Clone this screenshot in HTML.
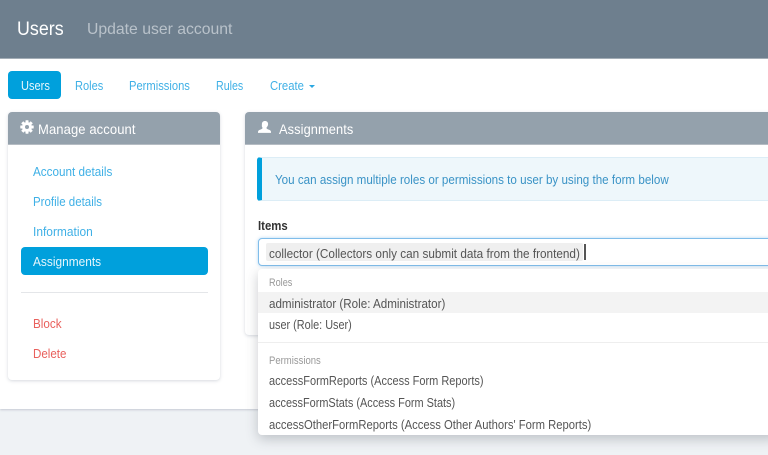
<!DOCTYPE html>
<html><head><meta charset="utf-8">
<style>
html,body{margin:0;padding:0}
body{width:768px;height:455px;overflow:hidden;position:relative;background:#eff2f5;font-family:"Liberation Sans",sans-serif;font-size:13px}
div,span.t{position:absolute;box-sizing:border-box}
.t{white-space:nowrap;line-height:16px;height:16px;transform-origin:0 50%}
.l{color:#3fb0e6}
.r{color:#e9605c}
.d{color:#555}
</style></head><body>
<div style="left:0;top:0;width:768px;height:409px;background:#fff;box-shadow:0 1px 2px rgba(120,130,150,.35)"></div>
<div style="left:0;top:0;width:768px;height:59px;background:#6e7f8e;border-bottom:1px solid #a3adb6"></div>
<span class="t" style="left:17px;top:21px;font-size:19px;line-height:18px;height:18px;color:#fff;transform:scaleX(.94)">Users</span>
<span class="t" style="left:87px;top:22px;font-size:16px;color:#b9c2ca;transform:scaleX(.985)">Update user account</span>

<div style="left:8px;top:71px;width:53px;height:28px;background:#00a0dc;border-radius:4px"></div>
<span class="t" style="left:21px;top:78px;color:#e6f6fc;transform:scaleX(.85)">Users</span>
<span class="t l" style="left:75px;top:78px;transform:scaleX(.85)">Roles</span>
<span class="t l" style="left:129px;top:78px;transform:scaleX(.86)">Permissions</span>
<span class="t l" style="left:216px;top:78px;transform:scaleX(.82)">Rules</span>
<span class="t l" style="left:270px;top:78px;transform:scaleX(.87)">Create</span>
<div style="left:309px;top:85px;width:0;height:0;border-left:3px solid transparent;border-right:3px solid transparent;border-top:3px solid #2aa8e2"></div>

<div style="left:8px;top:112px;width:212px;height:268px;background:#fff;border-radius:4px;box-shadow:0 1px 3px rgba(120,130,150,.3)"></div>
<div style="left:8px;top:112px;width:212px;height:33px;background:#94a1ac;border-radius:4px 4px 0 0;border-bottom:1px solid #b5bcc3"></div>
<svg style="position:absolute;left:20px;top:120px" width="14" height="14" viewBox="0 0 14 14"><g fill="#fff"><rect x="5.500" y="0.300" width="3" height="13.400" rx=".4"/><rect x="5.500" y="0.300" width="3" height="13.400" rx=".4" transform="rotate(45 7 7)"/><rect x="5.500" y="0.300" width="3" height="13.400" rx=".4" transform="rotate(90 7 7)"/><rect x="5.500" y="0.300" width="3" height="13.400" rx=".4" transform="rotate(135 7 7)"/><circle cx="7" cy="7" r="4.900"/></g><circle cx="7" cy="7" r="2" fill="#94a1ac"/></svg>
<span class="t" style="left:38px;top:121px;font-size:14px;color:#fff;letter-spacing:.1px;transform:scaleX(.93)">Manage account</span>

<span class="t l" style="left:33px;top:164px;transform:scaleX(.9)">Account details</span>
<span class="t l" style="left:33px;top:194px;transform:scaleX(.885)">Profile details</span>
<span class="t l" style="left:33px;top:224px;transform:scaleX(.92)">Information</span>
<div style="left:21px;top:247px;width:187px;height:28px;background:#00a0dc;border-radius:4px"></div>
<span class="t" style="left:33px;top:254px;color:#e6f6fc;transform:scaleX(.915)">Assignments</span>
<div style="left:21px;top:292px;width:187px;height:1px;background:#e4e6e9"></div>
<span class="t r" style="left:33px;top:316px;transform:scaleX(.9)">Block</span>
<span class="t r" style="left:33px;top:346px;transform:scaleX(.89)">Delete</span>

<div style="left:245px;top:112px;width:530px;height:223px;background:#fff;border-radius:4px;box-shadow:0 1px 3px rgba(120,130,150,.3)"></div>
<div style="left:245px;top:112px;width:530px;height:33px;background:#94a1ac;border-radius:4px 4px 0 0;border-bottom:1px solid #b5bcc3"></div>
<svg style="position:absolute;left:258px;top:120px" width="14" height="14" viewBox="0 0 14 14"><path fill="#fff" d="M7 1c2 0 3.100 1.300 3.100 3.100 0 1.400-.7 2.500-1.500 3.200v1.100c0 .5 1 .8 2.400 1.300 1.300.5 2 1.100 2 2.300v.9H0v-.9c0-1.200.7-1.800 2-2.300 1.400-.5 2.400-.8 2.400-1.300V7.300C3.600 6.600 3.900 5.500 3.900 4.100 3.900 2.300 5 1 7 1z"/></svg>
<span class="t" style="left:279px;top:121px;font-size:14px;color:#fff;letter-spacing:.1px;transform:scaleX(.915)">Assignments</span>

<div style="left:257px;top:157px;width:520px;height:44px;background:#eef7fb;border:1px solid #dcedf6;border-left:5px solid #00a0dc;border-radius:3px"></div>
<span class="t" style="left:275px;top:172px;font-size:12.500px;color:#3a93c6;transform:scaleX(.93)">You can assign multiple roles or permissions to user by using the form below</span>

<span class="t" style="left:258px;top:218px;font-weight:bold;color:#333;font-size:12.500px;transform:scaleX(.91)">Items</span>

<div style="left:258px;top:238px;width:520px;height:28px;background:#fff;border:1px solid #80bdea;border-radius:4px;box-shadow:0 0 3px rgba(102,175,233,.5)"></div>
<div style="left:266px;top:243px;width:317px;height:18px;background:#efefef;border-radius:2px"></div>
<span class="t d" style="left:269px;top:246px;font-size:12.500px;transform:scaleX(.94)">collector (Collectors only can submit data from the frontend)</span>
<div style="left:584px;top:244px;width:2px;height:16px;background:#555"></div>

<div style="left:258px;top:269px;width:520px;height:166px;background:#fff;border-radius:4px;box-shadow:0 4px 12px rgba(60,70,80,.28)"></div>
<span class="t" style="left:269px;top:275px;font-size:11px;color:#999;transform:scaleX(.83)">Roles</span>
<div style="left:258px;top:292px;width:510px;height:21px;background:#f3f3f3"></div>
<span class="t d" style="left:269px;top:296px;font-size:12.500px;transform:scaleX(.93)">administrator (Role: Administrator)</span>
<span class="t d" style="left:269px;top:317px;font-size:12.500px;transform:scaleX(.87)">user (Role: User)</span>
<div style="left:258px;top:342px;width:510px;height:1px;background:#eee"></div>
<span class="t" style="left:269px;top:353px;font-size:11px;color:#999;transform:scaleX(.865)">Permissions</span>
<span class="t d" style="left:269px;top:373px;font-size:12.500px;transform:scaleX(.88)">accessFormReports (Access Form Reports)</span>
<span class="t d" style="left:269px;top:395px;font-size:12.500px;transform:scaleX(.873)">accessFormStats (Access Form Stats)</span>
<span class="t d" style="left:269px;top:417px;font-size:12.500px;transform:scaleX(.9)">accessOtherFormReports (Access Other Authors' Form Reports)</span>
</body></html>
